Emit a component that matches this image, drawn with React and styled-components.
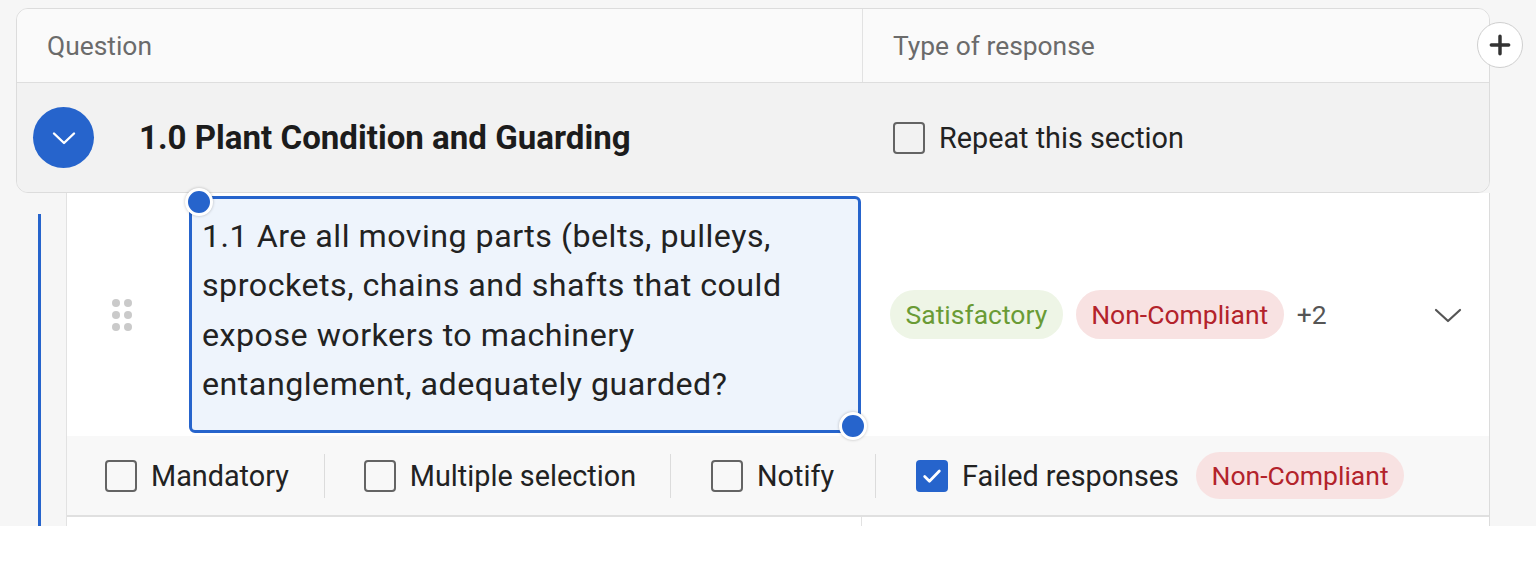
import { Fragment } from 'react'
import styled, { createGlobalStyle } from 'styled-components'

const GlobalStyle = createGlobalStyle`
  html, body {
    margin: 0;
    padding: 0;
    background: #ffffff;
    font-family: 'Roboto', 'Liberation Sans', sans-serif;
  }
  * {
    box-sizing: border-box;
  }
`

const Page = styled.div`
  width: 1536px;
  height: 526px;
  overflow: hidden;
  background: #f6f6f6;
  padding: 8px 46px 0 16px;
`

const Table = styled.div`
  position: relative;
  width: 1474px;
`

const SectionCard = styled.div`
  border: 1px solid #dcdcdc;
  border-radius: 12px;
  overflow: hidden;
`

const HeaderRow = styled.div`
  display: grid;
  grid-template-columns: 846px 1fr;
  height: 74px;
  background: #fafafa;
  border-bottom: 1px solid #dedede;
`

const HeaderCell = styled.div`
  display: flex;
  align-items: center;
  padding-left: ${(props) => props.$pad}px;
  font-size: 26.4px;
  color: #6b6b6b;
  border-right: ${(props) => (props.$divider ? '1px solid #e2e2e2' : 'none')};
`

const SectionRow = styled.div`
  display: grid;
  grid-template-columns: 846px 1fr;
  height: 109px;
  background: #f2f2f2;
`

const SectionTitleCell = styled.div`
  display: flex;
  align-items: center;
  padding-left: 16px;
  gap: 45px;
`

const ToggleCircle = styled.div`
  width: 61px;
  height: 61px;
  border-radius: 50%;
  background: #2664cc;
  display: flex;
  align-items: center;
  justify-content: center;
`

const SectionTitle = styled.h2`
  margin: 0;
  font-size: 33.1px;
  font-weight: 700;
  color: #1c1c1c;
`

const RepeatCell = styled.div`
  display: flex;
  align-items: center;
  padding-left: 30px;
`

const PlusButton = styled.button`
  position: absolute;
  top: 14px;
  right: -33px;
  width: 46px;
  height: 46px;
  border-radius: 50%;
  border: 1.5px solid #cfcfcf;
  background: #ffffff;
  padding: 0;
  display: flex;
  align-items: center;
  justify-content: center;
`

const Body = styled.div`
  display: flex;
`

const Rail = styled.div`
  width: 50px;
  flex-shrink: 0;
  padding-top: 21px;
  padding-left: 22px;
`

const RailLine = styled.div`
  width: 3px;
  height: 400px;
  background: #2664cc;
`

const QuestionBlock = styled.div`
  flex: 1;
  background: #ffffff;
  border-left: 1px solid #e2e2e2;
  border-right: 1px solid #dcdcdc;
`

const QuestionRow = styled.div`
  display: grid;
  grid-template-columns: 795px 1fr;
  height: 243px;
`

const QuestionCell = styled.div`
  display: flex;
  align-items: center;
  padding: 3px 0 3px 45px;
`

const DragHandle = styled.div`
  display: grid;
  grid-template-columns: repeat(2, 8px);
  gap: 4px;
  width: 20px;
`

const Dot = styled.span`
  width: 8px;
  height: 8px;
  border-radius: 50%;
  background: #cacaca;
`

const QuestionBox = styled.div`
  position: relative;
  margin-left: 57px;
  width: 672px;
  height: 237px;
  border: 3px solid #2664cc;
  border-radius: 6px;
  background: #eef4fc;
  padding: 13px 50px 0 10px;
  font-size: 32.2px;
  letter-spacing: 0.5px;
  line-height: 49.3px;
  color: #222222;
`

const Handle = styled.span`
  position: absolute;
  width: 28px;
  height: 28px;
  border-radius: 50%;
  background: #2664cc;
  border: 3px solid #ffffff;
  box-shadow: 0 0 3px rgba(0, 0, 0, 0.25);
  ${(props) => (props.$corner === 'start' ? 'top: -11px; left: -7px;' : 'bottom: -10px; right: -9px;')}
`

const ResponseCell = styled.div`
  display: flex;
  align-items: center;
  padding-left: 28px;
  padding-right: 26px;
  gap: 13px;
`

const Chip = styled.span`
  display: inline-flex;
  align-items: center;
  height: ${(props) => props.$height || 49}px;
  padding: 0 15.5px;
  border-radius: 25px;
  font-size: 26.5px;
  white-space: nowrap;
  background: ${(props) => (props.$tone === 'green' ? '#eef5e6' : '#f8e2e2')};
  color: ${(props) => (props.$tone === 'green' ? '#6a9b35' : '#b3232b')};
`

const MoreCount = styled.span`
  font-size: 26.5px;
  color: #555555;
`

const Chevron = styled.div`
  margin-left: auto;
  display: flex;
`

const OptionsRow = styled.div`
  display: flex;
  align-items: center;
  height: 81px;
  background: #f8f8f8;
  border-bottom: 2px solid #e0e0e0;
  padding-left: 38px;
`

const Option = styled.label`
  display: flex;
  align-items: center;
  gap: 14px;
  font-size: 28.8px;
  color: #222222;
`

const FailedChip = styled.span`
  margin-left: 3px;
  display: flex;
`

const Box = styled.span`
  width: 32px;
  height: 32px;
  border-radius: 4px;
  border: ${(props) => (props.$checked ? 'none' : '2.5px solid #646464')};
  background: ${(props) => (props.$checked ? '#2664cc' : 'transparent')};
  display: flex;
  align-items: center;
  justify-content: center;
  flex-shrink: 0;
`

const Separator = styled.span`
  width: 1px;
  height: 44px;
  background: #dcdcdc;
  margin: 0 ${(props) => props.$after}px 0 ${(props) => props.$before}px;
`

const NextRow = styled.div`
  display: grid;
  grid-template-columns: 795px 1fr;
  height: 40px;
`

const NextCell = styled.div`
  border-right: ${(props) => (props.$divider ? '1px solid #e2e2e2' : 'none')};
`

const Checkbox = ({ checked }) => (
  <Box $checked={checked}>
    {checked && (
      <svg width="22" height="22" viewBox="0 0 24 24" fill="none">
        <path d="M4 12.5l5.2 5.2L20 6.5" stroke="#ffffff" strokeWidth="3" strokeLinecap="round" strokeLinejoin="round" />
      </svg>
    )}
  </Box>
)

const options = [
  { label: 'Mandatory', before: 35, after: 39 },
  { label: 'Multiple selection', before: 34, after: 40 },
  { label: 'Notify', before: 41, after: 40 },
]

export default function App() {
  return (
    <>
      <GlobalStyle />
      <Page>
        <Table>
          <SectionCard>
            <HeaderRow>
              <HeaderCell $pad={30} $divider>
                Question
              </HeaderCell>
              <HeaderCell $pad={30}>Type of response</HeaderCell>
            </HeaderRow>
            <SectionRow>
              <SectionTitleCell>
                <ToggleCircle>
                  <svg width="28" height="28" viewBox="0 0 28 28" fill="none">
                    <path d="M4 9.5l10 9.5 10-9.5" stroke="#ffffff" strokeWidth="2.4" strokeLinecap="round" strokeLinejoin="round" />
                  </svg>
                </ToggleCircle>
                <SectionTitle>1.0 Plant Condition and Guarding</SectionTitle>
              </SectionTitleCell>
              <RepeatCell>
                <Option>
                  <Checkbox />
                  Repeat this section
                </Option>
              </RepeatCell>
            </SectionRow>
          </SectionCard>
          <PlusButton>
            <svg width="26" height="26" viewBox="0 0 24 24" fill="none">
              <path d="M12 4v16M4 12h16" stroke="#333333" strokeWidth="3.2" strokeLinecap="round" />
            </svg>
          </PlusButton>
          <Body>
            <Rail>
              <RailLine />
            </Rail>
            <QuestionBlock>
              <QuestionRow>
                <QuestionCell>
                  <DragHandle>
                    {Array.from({ length: 6 }).map((_, i) => (
                      <Dot key={i} />
                    ))}
                  </DragHandle>
                  <QuestionBox>
                    <Handle $corner="start" />
                    1.1 Are all moving parts (belts, pulleys, sprockets, chains and shafts that could expose workers to machinery
                    entanglement, adequately guarded?
                    <Handle $corner="end" />
                  </QuestionBox>
                </QuestionCell>
                <ResponseCell>
                  <Chip $tone="green">Satisfactory</Chip>
                  <Chip $tone="red">Non-Compliant</Chip>
                  <MoreCount>+2</MoreCount>
                  <Chevron>
                    <svg width="30" height="20" viewBox="0 0 30 20" fill="none">
                      <path d="M3 5l12 11L27 5" stroke="#555555" strokeWidth="2.2" strokeLinecap="round" strokeLinejoin="round" />
                    </svg>
                  </Chevron>
                </ResponseCell>
              </QuestionRow>
              <OptionsRow>
                {options.map((o) => (
                  <Fragment key={o.label}>
                    <Option>
                      <Checkbox />
                      {o.label}
                    </Option>
                    <Separator $before={o.before} $after={o.after} />
                  </Fragment>
                ))}
                <Option>
                  <Checkbox checked />
                  Failed responses
                  <FailedChip>
                    <Chip $tone="red" $height={47}>
                      Non-Compliant
                    </Chip>
                  </FailedChip>
                </Option>
              </OptionsRow>
              <NextRow>
                <NextCell $divider />
                <NextCell />
              </NextRow>
            </QuestionBlock>
          </Body>
        </Table>
      </Page>
    </>
  )
}
